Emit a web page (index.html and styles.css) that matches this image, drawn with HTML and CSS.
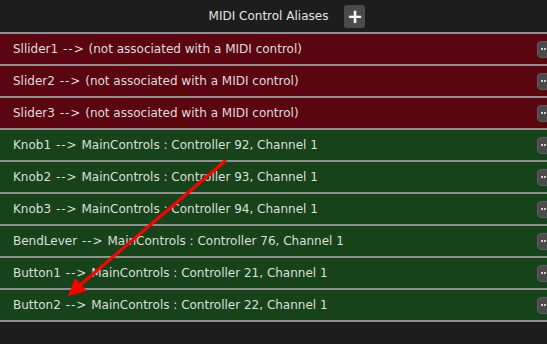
FILE: index.html
```html
<!DOCTYPE html>
<html lang="en">
<head>
    <meta charset="UTF-8">
    <meta name="viewport" content="width=device-width, initial-scale=1.0">
    <title>MIDI Control Aliases</title>
    <link rel="stylesheet" href="styles.css">
</head>
<body>
    <div class="panel">
        <div class="header">
            <span class="title">MIDI Control Aliases</span>
            <button class="add-btn">+</button>
        </div>
        <div class="alias-list">
            <div class="alias unassigned"><span>Sllider1 <span class="arrow">--&gt;</span> (not associated with a MIDI control)</span><button class="more-btn" title="More"></button></div>
            <div class="alias unassigned"><span>Slider2 <span class="arrow">--&gt;</span> (not associated with a MIDI control)</span><button class="more-btn" title="More"></button></div>
            <div class="alias unassigned"><span>Slider3 <span class="arrow">--&gt;</span> (not associated with a MIDI control)</span><button class="more-btn" title="More"></button></div>
            <div class="alias assigned"><span>Knob1 <span class="arrow">--&gt;</span> MainControls : Controller 92, Channel 1</span><button class="more-btn" title="More"></button></div>
            <div class="alias assigned"><span>Knob2 <span class="arrow">--&gt;</span> MainControls : Controller 93, Channel 1</span><button class="more-btn" title="More"></button></div>
            <div class="alias assigned"><span>Knob3 <span class="arrow">--&gt;</span> MainControls : Controller 94, Channel 1</span><button class="more-btn" title="More"></button></div>
            <div class="alias assigned"><span>BendLever <span class="arrow">--&gt;</span> MainControls : Controller 76, Channel 1</span><button class="more-btn" title="More"></button></div>
            <div class="alias assigned"><span>Button1 <span class="arrow">--&gt;</span> MainControls : Controller 21, Channel 1</span><button class="more-btn" title="More"></button></div>
            <div class="alias assigned"><span>Button2 <span class="arrow">--&gt;</span> MainControls : Controller 22, Channel 1</span><button class="more-btn" title="More"></button></div>
        </div>
    </div>
    <svg class="annotation" width="547" height="344" viewBox="0 0 547 344">
        <line x1="225" y1="161" x2="79" y2="286" stroke="#ff0000" stroke-width="3" stroke-linecap="round"/>
        <polygon points="68,296 87,291 75,278" fill="#ff0000"/>
    </svg>
</body>
</html>
```

FILE: styles.css
```css
body {
    font-family: "DejaVu Sans", Verdana, sans-serif;
    background-color: #1d1d1d;
    color: #dedede;
    margin: 0;
    padding: 0;
    width: 547px;
    height: 344px;
    overflow: hidden;
    position: relative;
}

.header {
    height: 32px;
    display: flex;
    align-items: center;
    justify-content: center;
    gap: 16px;
    padding-left: 27px;
    box-sizing: border-box;
}

.title {
    font-size: 12px;
    color: #e4e4e4;
}

.add-btn {
    width: 21px;
    height: 23px;
    border: none;
    border-radius: 3px;
    background: #4b4b4b;
    color: #fff;
    font-size: 19px;
    font-weight: bold;
    line-height: 23px;
    padding: 0;
    font-family: "DejaVu Sans", sans-serif;
}

.alias-list {
    border-top: 2px solid #8f8f8f;
}

.alias {
    height: 30px;
    border-bottom: 2px solid #8f8f8f;
    display: flex;
    align-items: center;
    justify-content: space-between;
    padding-left: 13px;
    font-size: 12px;
}

.alias .arrow {
    letter-spacing: 1px;
    margin-left: 1px;
}

.alias.unassigned {
    background: #5b0511;
}

.alias.assigned {
    background: #17431a;
}

.more-btn {
    width: 20px;
    height: 17px;
    margin-right: -10px;
    background: #4a4a4a;
    border: 1px solid #5e5e5e;
    border-radius: 4px;
    padding: 0;
    display: flex;
    align-items: center;
}

.more-btn::before {
    content: "";
    width: 2px;
    height: 2px;
    margin-left: 3px;
    background: #cfcfcf;
    box-shadow: 3px 0 #cfcfcf, 6px 0 #cfcfcf;
}

.annotation {
    position: absolute;
    left: 0;
    top: 0;
    pointer-events: none;
}
```
